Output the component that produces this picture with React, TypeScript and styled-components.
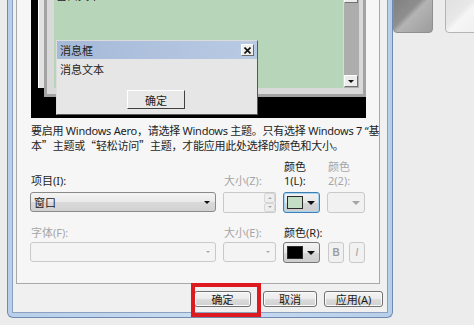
import React from 'react';
import styled, { createGlobalStyle } from 'styled-components';

const GlobalStyle = createGlobalStyle`
  html, body {
    margin: 0;
    padding: 0;
    background: #ececec;
  }
  body {
    font-family: "Noto Sans", "Noto Sans CJK SC", sans-serif;
    font-size: 11px;
    color: #1e1e1e;
  }
`;

const Desktop = styled.div`
  width: 474px;
  height: 325px;
  overflow: hidden;
  display: flex;
  align-items: flex-start;
  padding-left: 7px;
  box-sizing: border-box;
  background: #ececec;
`;

const WindowFrame = styled.div`
  flex-shrink: 0;
  width: 386px;
  height: 318px;
  box-sizing: border-box;
  border: 1px solid #6e8aae;
  border-top: none;
  border-radius: 0 0 6px 6px;
  background: linear-gradient(90deg, #b7cfea, #c9dcf1 50%, #b7cfea);
  padding: 0 4px 4px;
  display: flex;
`;

const Client = styled.div`
  flex: 1;
  border: 1px solid #8ba1bd;
  border-top: none;
  background: #f0f0f0;
  display: flex;
  flex-direction: column;
`;

const Panel = styled.div`
  margin-left: 3px;
  width: 364px;
  height: 284px;
  box-sizing: border-box;
  border: 1px solid #a8a8a8;
  border-top: none;
  background: #f6f6f6;
  padding-left: 14px;
  display: flex;
  flex-direction: column;
`;

const Preview = styled.div`
  position: relative;
  width: 335px;
  height: 118px;
  background: #000;
  overflow: hidden;
  flex-shrink: 0;
`;

const InactiveWin = styled.div`
  position: absolute;
  left: 7px;
  top: -20px;
  width: 300px;
  height: 108px;
  background: #e2e2e2;
  border-left: 1px solid #ffffff;
`;

const ActiveWin = styled.div`
  position: absolute;
  left: 13px;
  right: 0;
  top: -20px;
  height: 117px;
  box-sizing: border-box;
  background: #d9d9d9;
  border: 3px solid #a3a3a3;
  border-top: none;
  padding: 0 4px 6px 7px;
  display: flex;
`;

const GreenClient = styled.div`
  flex: 1;
  background: #b7d5b9;
  padding: 9px 0 0 2px;
  color: #222;
  line-height: 13px;
`;

const ScrollTrack = styled.div`
  width: 15px;
  background: #adadad;
  border-left: 1px solid #d8d8d8;
  display: flex;
  flex-direction: column;
  justify-content: space-between;
`;

const ScrollBtn = styled.div<{ $top?: boolean }>`
  height: ${p => (p.$top ? 23 : 12)}px;
  margin: 0 1px ${p => (p.$top ? 0 : 1)}px 0;
  background: #ececec;
  border: 1px solid;
  border-color: #ffffff #707070 #707070 #ffffff;
  display: flex;
  align-items: flex-end;
  justify-content: center;
  padding-bottom: 3px;
  box-sizing: border-box;
`;

const MsgBox = styled.div`
  position: absolute;
  left: 25px;
  top: 40px;
  width: 202px;
  height: 75px;
  box-sizing: border-box;
  background: #e6e6e6;
  border: 1px solid;
  border-color: #dcdcdc #5a5a5a #5a5a5a #dcdcdc;
  display: flex;
  flex-direction: column;
`;

const MsgTitle = styled.div`
  height: 18px;
  background: linear-gradient(90deg, #a5b9d8, #b9cae3);
  display: flex;
  align-items: center;
  justify-content: space-between;
  padding: 0 3px 0 3px;
  color: #1c1c1c;
`;

const CloseBtn = styled.div`
  width: 13px;
  height: 12px;
  box-sizing: border-box;
  background: #eeeeee;
  border: 1px solid;
  border-color: #ffffff #6a6a6a #6a6a6a #ffffff;
  display: flex;
  align-items: center;
  justify-content: center;
`;

const MsgText = styled.div`
  padding: 4px 0 0 3px;
  line-height: 13px;
  color: #222;
`;

const MsgButton = styled.div`
  margin: auto 0 5px 70px;
  width: 58px;
  height: 19px;
  box-sizing: border-box;
  border: 1px solid;
  border-color: #ffffff #404040 #404040 #ffffff;
  background: #e8e8e8;
  display: flex;
  align-items: center;
  justify-content: center;
  color: #1c1c1c;
`;

const Note = styled.p`
  margin: 6px 0 0;
  line-height: 14px;
  letter-spacing: -0.25px;
  width: 345px;
  color: #1e1e1e;
  white-space: nowrap;
`;

const Quote = styled.span`
  font-family: "Noto Sans CJK SC", sans-serif;
  letter-spacing: 0;
`;

const Form = styled.div`
  margin: 13px 0 0 -1px;
  display: grid;
  grid-template-columns: 186px 53px 37px 38px;
  grid-template-rows: 26px 20px 30px 20px;
  column-gap: 7px;
`;

const Label = styled.div<{ $disabled?: boolean; $pad: number }>`
  align-self: end;
  padding: 0 0 ${p => p.$pad}px 1px;
  line-height: 14px;
  color: ${p => (p.$disabled ? '#a6a6a6' : '#1e1e1e')};
  white-space: nowrap;
`;

const Select = styled.div<{ $disabled?: boolean }>`
  box-sizing: border-box;
  height: 20px;
  border: 1px solid ${p => (p.$disabled ? '#c9c9c9' : '#8a8a8a')};
  border-radius: 3px;
  background: ${p =>
    p.$disabled ? '#f4f4f4' : 'linear-gradient(#f4f4f4, #e9e9e9 50%, #d9d9d9 51%, #d2d2d2)'};
  display: flex;
  align-items: center;
  justify-content: space-between;
  padding: 0 5px 0 3px;
  color: #1a1a1a;
`;

const Arrow = styled.span<{ $color?: string; $size?: number }>`
  width: 0;
  height: 0;
  border-left: ${p => p.$size ?? 3}px solid transparent;
  border-right: ${p => p.$size ?? 3}px solid transparent;
  border-top: ${p => p.$size ?? 3}px solid ${p => p.$color ?? '#111'};
`;

const UpArrow = styled.span`
  width: 0;
  height: 0;
  border-left: 2px solid transparent;
  border-right: 2px solid transparent;
  border-bottom: 2px solid #a8a8a8;
`;

const SpinBox = styled.div`
  box-sizing: border-box;
  height: 21px;
  border: 1px solid #c9c9c9;
  border-radius: 2px;
  background: #f4f4f4;
  display: flex;
  justify-content: flex-end;
`;

const SpinButtons = styled.div`
  width: 11px;
  display: flex;
  flex-direction: column;
`;

const SpinHalf = styled.div`
  flex: 1;
  border: 1px solid #d6d6d6;
  border-radius: 2px;
  background: #eeeeee;
  display: flex;
  align-items: center;
  justify-content: center;
`;

const ColorButton = styled.div<{ $focus?: boolean; $disabled?: boolean }>`
  box-sizing: border-box;
  height: 21px;
  border: 1px solid ${p => (p.$focus ? '#3d7fb0' : p.$disabled ? '#c9c9c9' : '#767676')};
  box-shadow: ${p => (p.$focus ? 'inset 0 0 0 1px #a9d3ef' : 'none')};
  border-radius: 3px;
  background: ${p =>
    p.$disabled ? '#f1f1f1' : 'linear-gradient(#f4f4f4, #e6e6e6 50%, #d6d6d6 51%, #cdcdcd)'};
  display: flex;
  align-items: center;
  justify-content: ${p => (p.$disabled ? 'flex-end' : 'space-between')};
  padding: 0 4px 0 3px;
`;

const Swatch = styled.span<{ $color: string }>`
  width: 16px;
  height: 13px;
  box-sizing: border-box;
  border: 1px solid #2a2a2a;
  background: ${p => p.$color};
`;

const StyleButtons = styled.div`
  display: flex;
  gap: 5px;
  padding-left: 1px;
`;

const StyleButton = styled.div<{ $italic?: boolean }>`
  box-sizing: border-box;
  width: 16px;
  height: 21px;
  border: 1px solid #c9c9c9;
  border-radius: 3px;
  background: #f1f1f1;
  display: flex;
  align-items: center;
  justify-content: center;
  font-family: "Liberation Sans", sans-serif;
  font-size: 10px;
  font-weight: ${p => (p.$italic ? 400 : 700)};
  font-style: ${p => (p.$italic ? 'italic' : 'normal')};
  color: #9d9d9d;
`;

const ButtonBar = styled.div`
  display: flex;
  justify-content: flex-end;
  padding: 7px 4px 0 0;
`;

const DialogButton = styled.div<{ $w: number; $ml: number }>`
  position: relative;
  box-sizing: border-box;
  width: ${p => p.$w}px;
  height: 16px;
  margin-left: ${p => p.$ml}px;
  border: 1px solid #707070;
  border-radius: 3px;
  background: linear-gradient(#f3f3f3, #ebebeb 50%, #dddddd 51%, #cfcfcf);
  box-shadow: inset 0 0 0 1px #fbfbfb;
  display: flex;
  align-items: center;
  justify-content: center;
  line-height: 13px;
  color: #1a1a1a;
`;

const Highlight = styled.div`
  position: absolute;
  left: -4px;
  right: -11px;
  top: -9px;
  bottom: -11px;
  border: 4px solid #dd1a1f;
  pointer-events: none;
`;

const SideArea = styled.div`
  flex-shrink: 0;
  display: flex;
  gap: 12px;
  margin-top: -10px;
`;

const ThemeTile = styled.div<{ $dark?: boolean }>`
  flex-shrink: 0;
  width: 40px;
  height: 43px;
  box-sizing: border-box;
  border: 1px solid ${p => (p.$dark ? '#8f8f8f' : '#b4b4b4')};
  border-radius: 0 0 4px 4px;
  background: ${p =>
    p.$dark
      ? 'linear-gradient(135deg, #7c7c7c 0%, #8e8e8e 45%, #b4b4b4 55%, #9c9c9c 100%)'
      : 'linear-gradient(135deg, #dedede 0%, #e8e8e8 45%, #f6f6f6 55%, #eeeeee 100%)'};
`;

const CloseGlyph = () => (
  <svg width="7" height="7" viewBox="0 0 7 7">
    <path d="M0.5 0.5 L6.5 6.5 M6.5 0.5 L0.5 6.5" stroke="#111" strokeWidth="1.6" />
  </svg>
);

const App: React.FC = () => {
  return (
    <>
      <GlobalStyle />
      <Desktop>
        <WindowFrame>
          <Client>
            <Panel>
              <Preview>
                <InactiveWin />
                <ActiveWin>
                  <GreenClient>窗口文本</GreenClient>
                  <ScrollTrack>
                    <ScrollBtn $top />
                    <ScrollBtn>
                      <Arrow $size={3} />
                    </ScrollBtn>
                  </ScrollTrack>
                </ActiveWin>
                <MsgBox>
                  <MsgTitle>
                    <span>消息框</span>
                    <CloseBtn>
                      <CloseGlyph />
                    </CloseBtn>
                  </MsgTitle>
                  <MsgText>消息文本</MsgText>
                  <MsgButton>确定</MsgButton>
                </MsgBox>
              </Preview>

              <Note>
                要启用 Windows Aero，请选择 Windows 主题。只有选择 Windows 7 “基
                <br />
                本<Quote>”</Quote>主题或<Quote>“</Quote>轻松访问<Quote>”</Quote>主题，才能应用此处选择的颜色和大小。
              </Note>

              <Form>
                <Label $pad={4}>项目(I):</Label>
                <Label $pad={4} $disabled>大小(Z):</Label>
                <Label $pad={4}>
                  颜色
                  <br />
                  1(L):
                </Label>
                <Label $pad={4} $disabled>
                  颜色
                  <br />
                  2(2):
                </Label>

                <Select>
                  <span>窗口</span>
                  <Arrow />
                </Select>
                <SpinBox>
                  <SpinButtons>
                    <SpinHalf>
                      <UpArrow />
                    </SpinHalf>
                    <SpinHalf>
                      <Arrow $color="#a8a8a8" $size={2} />
                    </SpinHalf>
                  </SpinButtons>
                </SpinBox>
                <ColorButton $focus>
                  <Swatch $color="#c3dec4" />
                  <Arrow $size={4} />
                </ColorButton>
                <ColorButton $disabled>
                  <Arrow $size={4} $color="#a5a5a5" />
                </ColorButton>

                <Label $pad={2} $disabled>字体(F):</Label>
                <Label $pad={2} $disabled>大小(E):</Label>
                <Label $pad={2}>颜色(R):</Label>
                <div />

                <Select $disabled>
                  <span />
                  <Arrow $color="#a8a8a8" $size={2} />
                </Select>
                <Select $disabled>
                  <span />
                  <Arrow $color="#a8a8a8" $size={2} />
                </Select>
                <ColorButton>
                  <Swatch $color="#000000" />
                  <Arrow $size={4} />
                </ColorButton>
                <StyleButtons>
                  <StyleButton>B</StyleButton>
                  <StyleButton $italic>I</StyleButton>
                </StyleButtons>
              </Form>
            </Panel>

            <ButtonBar>
              <DialogButton $w={57} $ml={0}>
                确定
                <Highlight />
              </DialogButton>
              <DialogButton $w={54} $ml={12}>取消</DialogButton>
              <DialogButton $w={59} $ml={7}>应用(A)</DialogButton>
            </ButtonBar>
          </Client>
        </WindowFrame>
        <SideArea>
          <ThemeTile $dark />
          <ThemeTile />
        </SideArea>
      </Desktop>
    </>
  );
};

export default App;
